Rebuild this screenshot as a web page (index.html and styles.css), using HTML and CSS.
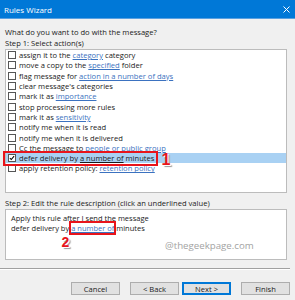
FILE: index.html
```html
<!DOCTYPE html>
<html lang="en">
<head>
    <meta charset="UTF-8">
    <meta name="viewport" content="width=device-width, initial-scale=1.0">
    <title>Rules Wizard</title>
    <link rel="stylesheet" href="styles.css">
</head>
<body>
    <div class="window">
        <div class="titlebar">
            <span>Rules Wizard</span>
            <svg class="close" width="7" height="7" viewBox="0 0 7 7">
                <path d="M0.5 0.5 L6.5 6.5 M6.5 0.5 L0.5 6.5" stroke="#fff" stroke-width="1"/>
            </svg>
        </div>
        <div class="content">
            <p class="line">What do you want to do with the message?</p>
            <p class="line">Step 1: Select action(s)</p>
            <ul class="actions">
                <li><span class="check"></span><span>assign it to the <a>category</a> category</span></li>
                <li><span class="check"></span><span>move a copy to the <a>specified</a> folder</span></li>
                <li><span class="check"></span><span>flag message for <a>action in a number of days</a></span></li>
                <li><span class="check"></span><span>clear message's categories</span></li>
                <li><span class="check"></span><span>mark it as <a>importance</a></span></li>
                <li><span class="check"></span><span>stop processing more rules</span></li>
                <li><span class="check"></span><span>mark it as <a>sensitivity</a></span></li>
                <li><span class="check"></span><span>notify me when it is read</span></li>
                <li><span class="check"></span><span>notify me when it is delivered</span></li>
                <li><span class="check"></span><span>Cc the message to <a>people or public group</a></span></li>
                <li class="selected">
                    <span class="mark">
                        <span class="check checked">
                            <svg width="8" height="8" viewBox="0 0 8 8"><path d="M1.2 4.2 L3 6 L6.8 1.6" fill="none" stroke="#000" stroke-width="1.4"/></svg>
                        </span>
                        <span>defer delivery by <a>a number of</a> minutes</span>
                        <span class="badge badge-one">1</span>
                    </span>
                </li>
                <li><span class="check"></span><span>apply retention policy: <a>retention policy</a></span></li>
            </ul>
            <p class="line step-two">Step 2: Edit the rule description (click an underlined value)</p>
            <div class="description">
                <div class="desc-line">Apply this rule after I send the message</div>
                <div class="desc-line">defer delivery by <a class="value">a number of<span class="badge badge-two">2</span></a> minutes</div>
                <span class="watermark">@thegeekpage.com</span>
            </div>
        </div>
        <div class="separator"></div>
        <div class="buttons">
            <button class="btn">Cancel</button>
            <button class="btn">&lt; Back</button>
            <button class="btn btn-default">Next &gt;</button>
            <button class="btn">Finish</button>
        </div>
    </div>
</body>
</html>
```

FILE: styles.css
```css
body {
    margin: 0;
    background: #f0f0f0;
    font-family: "Open Sans", "Noto Sans", sans-serif;
    font-size: 7.6px;
    color: #1a1a1a;
}

.window {
    width: 295px;
    height: 300px;
    position: relative;
    overflow: hidden;
}

.titlebar {
    height: 18px;
    background: #0078d7;
    color: #fff;
    font-size: 8px;
    display: flex;
    align-items: center;
    justify-content: space-between;
    padding: 0 5px 0 4px;
    border-bottom: 1px solid #5aa0e0;
}

.content {
    padding: 8px 8px 0 5px;
}

.line {
    margin: 0;
    line-height: 11px;
}

.actions {
    list-style: none;
    margin: 0;
    padding: 0;
    height: 142px;
    border: 1px solid #bcbcbc;
    background: #fff;
}

.actions li {
    height: 10.3px;
    display: flex;
    align-items: center;
    padding-left: 2px;
    white-space: nowrap;
}

.check {
    width: 8px;
    height: 8px;
    box-sizing: border-box;
    border: 1px solid #555;
    background: #fff;
    margin-right: 3px;
    flex-shrink: 0;
    display: flex;
    align-items: center;
    justify-content: center;
}

.check svg {
    display: block;
}

a {
    color: #3b72c0;
    text-decoration: underline;
}

.actions .selected {
    background: #a9d1f3;
}

.selected a {
    color: #1a1a1a;
}

.mark {
    display: flex;
    align-items: center;
    height: 100%;
    position: relative;
}

.mark::after {
    content: "";
    position: absolute;
    left: -5px;
    right: -4px;
    top: -2px;
    bottom: -3px;
    border: 2px solid #e8141b;
}

.badge {
    position: absolute;
    color: #e8141b;
    font-family: "Liberation Sans", Arial, sans-serif;
    font-weight: bold;
    line-height: 15px;
    text-decoration: none;
    text-shadow: 1px 1px 0 #fff, 2px 2px 1px #999;
}

.badge-one {
    font-size: 16px;
    left: calc(100% + 7px);
    top: -1px;
}

.badge-two {
    font-size: 14px;
    right: calc(100% + 2px);
    top: 12px;
}

.step-two {
    margin-top: 5px;
}

.description {
    position: relative;
    height: 51px;
    box-sizing: border-box;
    border: 1px solid #bcbcbc;
    background: #fff;
    padding: 3px 5px;
    font-size: 7.5px;
}

.desc-line {
    line-height: 10.3px;
    white-space: nowrap;
}

.value {
    position: relative;
}

.value::after {
    content: "";
    position: absolute;
    left: -2px;
    right: -2px;
    top: -2px;
    bottom: -2px;
    border: 2px solid #e8141b;
}

.watermark {
    position: absolute;
    left: 159px;
    top: 29px;
    font-size: 9.7px;
    color: #a3a3a3;
}

.separator {
    margin: 8px 5px 0 0;
    border-top: 1px solid #a0a0a0;
    border-bottom: 1px solid #fff;
}

.buttons {
    display: flex;
    justify-content: flex-end;
    padding: 12px 5px 0 0;
}

.btn {
    width: 49px;
    height: 13px;
    padding: 0;
    margin-left: 10px;
    font-family: "Open Sans", "Noto Sans", sans-serif;
    font-size: 7.6px;
    color: #1a1a1a;
    background: #e1e1e1;
    border: 1px solid #adadad;
}

.btn-default {
    margin-left: 3px;
    border: 1px solid #0078d7;
    box-shadow: inset 0 0 0 1px #0078d7;
}
```
